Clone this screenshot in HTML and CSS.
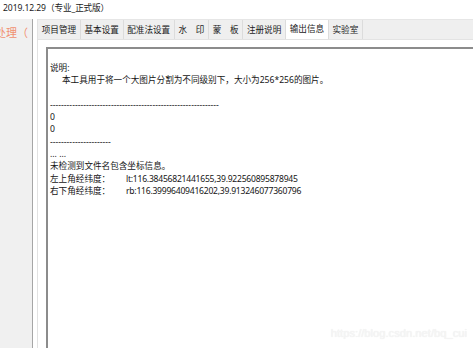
FILE: index.html
```html
<!DOCTYPE html>
<html lang="zh-CN">
<head>
<meta charset="utf-8">
<title>输出信息</title>
<link rel="stylesheet" href="styles.css">
</head>
<body>
<div class="app">
  <div class="title">2019.12.29（专业_正式版）</div>
  <div class="main">
    <div class="side"><span class="side-text">处理（</span></div>
    <div class="tabctl">
      <div class="tabs">
        <div class="tab">项目管理</div>
        <div class="tab">基本设置</div>
        <div class="tab">配准法设置</div>
        <div class="tab">水　印</div>
        <div class="tab">蒙　板</div>
        <div class="tab">注册说明</div>
        <div class="tab active">输出信息</div>
        <div class="tab">实验室</div>
      </div>
      <div class="page">
        <div class="output">
          <div class="line">说明:</div>
          <div class="line indent">本工具用于将一个大图片分割为不同级别下，大小为256*256的图片。</div>
          <div class="line"></div>
          <div class="line">-------------------------------------------------------------</div>
          <div class="line">0</div>
          <div class="line">0</div>
          <div class="line">----------------------</div>
          <div class="line">... ...</div>
          <div class="line">未检测到文件名包含坐标信息。</div>
          <div class="line"><span class="lbl">左上角经纬度：</span><span class="num">lt:116.38456821441655,39.922560895878945</span></div>
          <div class="line"><span class="lbl">右下角经纬度：</span><span class="num">rb:116.39996409416202,39.913246077360796</span></div>
        </div>
      </div>
    </div>
  </div>
  <div class="watermark">https://blog.csdn.net/bq_cui</div>
</div>
</body>
</html>
```

FILE: styles.css
```css
html, body {
  margin: 0;
  padding: 0;
  background: #ffffff;
}

body {
  width: 474px;
  height: 348px;
  overflow: hidden;
  font-family: "Noto Sans", "Noto Sans CJK SC", sans-serif;
  font-size: 8.6px;
  color: #141414;
}

.app {
  position: relative;
  width: 474px;
  height: 348px;
  display: flex;
  flex-direction: column;
}

.title {
  height: 19px;
  line-height: 17px;
  padding-left: 3px;
  color: #1a1a1a;
  letter-spacing: -0.1px;
}

.main {
  flex: 1;
  display: flex;
  min-height: 0;
}

.side {
  width: 32px;
  background: #f0f0f0;
  border-right: 1px solid #a6a6a6;
  overflow: hidden;
  white-space: nowrap;
}

.side-text {
  display: block;
  margin-left: -5px;
  margin-top: 6px;
  font-family: "Noto Sans CJK SC", sans-serif;
  font-size: 11px;
  line-height: 14px;
  color: #f09070;
}

.tabctl {
  margin-left: 4px;
  flex: 1;
  display: flex;
  flex-direction: column;
  border-left: 1px solid #e2e2e2;
  min-width: 0;
}

.tabs {
  height: 19px;
  display: flex;
  background: #efefef;
  border-top: 1px solid #e6e6e6;
  border-bottom: 1px solid #e3e3e3;
  margin-right: 1px;
}

.tab {
  padding: 0 3.7px;
  border-right: 1px solid #dcdcdc;
  line-height: 21px;
  white-space: nowrap;
  color: #1a1a1a;
}

.tab.active {
  background: #ffffff;
  line-height: 18px;
}

.page {
  flex: 1;
  padding: 7px 1px 0 8px;
  background: #ffffff;
  min-height: 0;
}

.output {
  height: 100%;
  border-top: 2px solid #8c8c8c;
  border-left: 2px solid #8c8c8c;
  padding: 13px 0 0 2px;
  box-sizing: border-box;
  overflow: hidden;
}

.line {
  height: 12.3px;
  line-height: 12.3px;
  white-space: pre;
}

.indent {
  padding-left: 12px;
}

.lbl {
  display: inline-block;
  width: 76px;
}

.num {
  letter-spacing: -0.25px;
}

.watermark {
  position: absolute;
  right: 7px;
  top: 327px;
  font-family: "Liberation Sans", sans-serif;
  font-size: 11.2px;
  color: #f6f6f6;
  text-shadow: 0 0 1px #e4e4e4;
}
```
